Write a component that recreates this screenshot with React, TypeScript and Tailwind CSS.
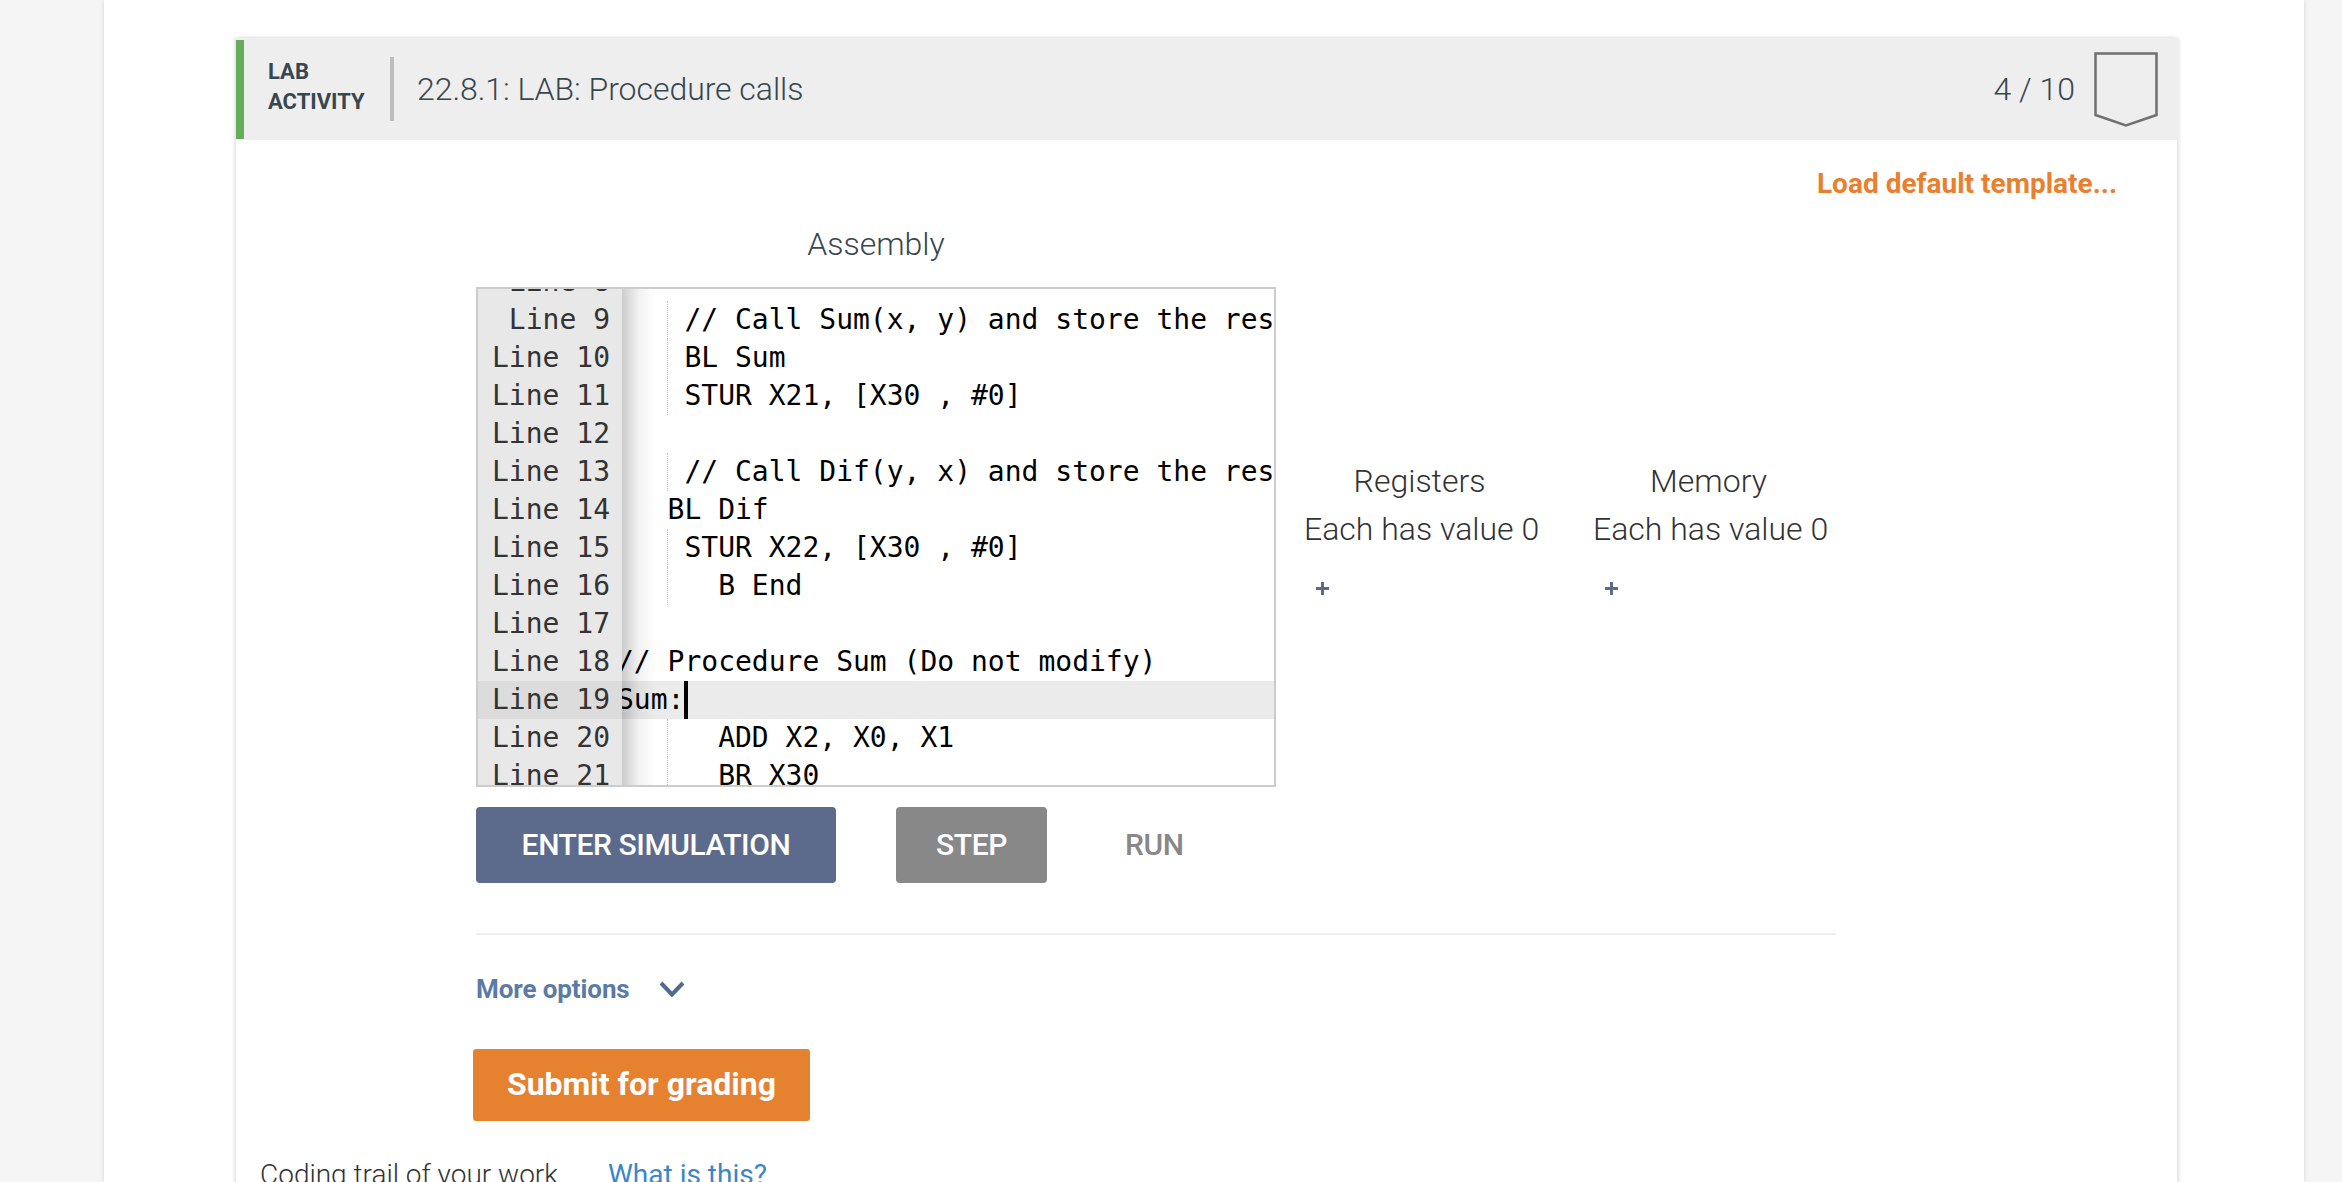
const LINES: [number, string, boolean][] = [
  [8, "", false],
  [9, "    // Call Sum(x, y) and store the res", true],
  [10, "    BL Sum", true],
  [11, "    STUR X21, [X30 , #0]", true],
  [12, "", false],
  [13, "    // Call Dif(y, x) and store the res", true],
  [14, "   BL Dif", false],
  [15, "    STUR X22, [X30 , #0]", true],
  [16, "      B End", true],
  [17, "", false],
  [18, "// Procedure Sum (Do not modify)", false],
  [19, "Sum:", false],
  [20, "      ADD X2, X0, X1", true],
  [21, "      BR X30", true],
];

function Editor() {
  return (
    <div className="relative w-[800px] h-[500px] border-2 border-[#cccccc] bg-white overflow-hidden font-['DejaVu_Sans_Mono',monospace] text-[28px] leading-[38px]">
      <div className="-mt-[26px]">
        {LINES.map(([n, text, guide]) => (
          <div key={n} className={`flex h-[38px] ${n === 19 ? "bg-[#ebebeb]" : ""}`}>
            <div
              className={`relative z-10 w-[144px] shrink-0 pr-[12px] text-right text-[#333333] ${
                n === 19 ? "bg-[#dcdcdc]" : "bg-[#e8e8e8]"
              }`}
            >
              Line {n}
            </div>
            <div className="relative -ml-[5px] flex-1 whitespace-pre text-black">
              {guide && <span className="absolute left-[50px] top-0 h-full border-l border-dotted border-[#c4c4c4]" />}
              {text}
              {n === 19 && <span className="absolute left-[67px] top-0 h-full w-[4px] bg-black" />}
            </div>
          </div>
        ))}
      </div>
      <div className="pointer-events-none absolute inset-y-0 left-[144px] z-20 w-[34px] bg-gradient-to-r from-[rgba(0,0,0,0.2)] via-[rgba(0,0,0,0.05)] to-transparent" />
    </div>
  );
}

function StateColumn({ title }: { title: string }) {
  return (
    <div className="w-[235px] text-[#333333] font-light text-[32px] leading-[48px]">
      <div className="pr-[4px] text-center">{title}</div>
      <div className="text-center whitespace-nowrap">Each has value 0</div>
      <svg className="mt-[28px] ml-[11px]" width="15" height="15" viewBox="0 0 15 15">
        <path d="M7.5 1v13M1 7.5h13" stroke="#5c6b8c" strokeWidth="3" fill="none" />
      </svg>
    </div>
  );
}

export default function App() {
  return (
    <div className="h-[1182px] overflow-hidden bg-[#f5f5f5] font-['Roboto',sans-serif]">
      <div className="ml-[104px] w-[2200px] h-[1182px] overflow-hidden bg-white pt-[38px] pl-[132px] shadow-[0_0_4px_rgba(0,0,0,0.15)]">
        <div className="w-[1941px] bg-white shadow-[2px_0_4px_rgba(0,0,0,0.12),-2px_0_3px_rgba(0,0,0,0.1)]">
          <header className="-mr-[2px] flex h-[102px] items-center bg-[#eeeeee] pr-[21px]">
            <div className="mt-[2px] mb-px h-[99px] w-[8px] bg-[#66ad5b]" />
            <div className="-mt-[5px] ml-[24px] w-[122px] text-[22px] font-bold leading-[30px] text-[#37474f]">
              <div>LAB</div>
              <div>ACTIVITY</div>
            </div>
            <div className="h-[64px] w-[4px] bg-[#bdbdbd]" />
            <h1 className="-mt-[1px] ml-[23px] text-[32px] font-light -tracking-[0.05px] text-[#37474f]">22.8.1: LAB: Procedure calls</h1>
            <div className="-mt-[1px] ml-auto text-[32px] font-light text-[#37474f]">4 / 10</div>
            <svg className="ml-[19px]" width="64" height="75" viewBox="0 0 64 75" fill="none">
              <path d="M1.5 1.5H62.5V63L32 73.5L1.5 63Z" stroke="#707070" strokeWidth="2.5" />
            </svg>
          </header>

          <div className="flex justify-end pr-[60px] pt-[26px]">
            <a className="text-[28px] font-bold leading-[36px] text-[#e8802f]">Load default template...</a>
          </div>

          <div className="ml-[240px] w-[1360px]">
            <div className="mt-[20px] flex h-[44px] w-[800px] items-center justify-center text-[32px] font-light text-[#37474f]">
              Assembly
            </div>
            <div className="mt-[21px] flex items-start">
              <Editor />
              <div className="ml-[28px] mt-[170px] flex gap-[54px]">
                <StateColumn title="Registers" />
                <StateColumn title="Memory" />
              </div>
            </div>

            <div className="mt-[20px] flex items-center">
              <button className="h-[76px] w-[360px] rounded-[4px] bg-[#5c6b8c] pb-[2px] text-[30px] font-medium -tracking-[0.4px] text-white">
                ENTER SIMULATION
              </button>
              <button className="ml-[60px] h-[76px] w-[151px] rounded-[4px] bg-[#888888] pb-[2px] text-[30px] font-medium -tracking-[0.4px] text-white">
                STEP
              </button>
              <span className="ml-[78px] pb-[2px] text-[30px] font-medium -tracking-[0.4px] text-[#888888]">RUN</span>
            </div>

            <div className="mt-[50px] h-[2px] bg-[#eeeeee]" />

            <div className="mt-[34px] flex h-[40px] items-center">
              <span className="text-[26px] font-bold -tracking-[0.1px] text-[#5b7ba6]">More options</span>
              <svg className="ml-[29px]" width="26" height="16" viewBox="0 0 26 16" fill="none">
                <path d="M2 2L13 13.5L24 2" stroke="#4f6b8f" strokeWidth="4" />
              </svg>
            </div>
          </div>

          <button className="ml-[237px] mt-[40px] h-[72px] w-[337px] rounded-[3px] bg-[#e68130] pb-[2px] text-[32px] font-bold text-white">
            Submit for grading
          </button>

          <div className="mt-[32px] ml-[24px] flex text-[28px] font-light leading-[44px] text-[#333333]">
            <span>Coding trail of your work</span>
            <a className="ml-[50px] font-normal text-[#3b86c8]">What is this?</a>
          </div>
        </div>
      </div>
    </div>
  );
}
